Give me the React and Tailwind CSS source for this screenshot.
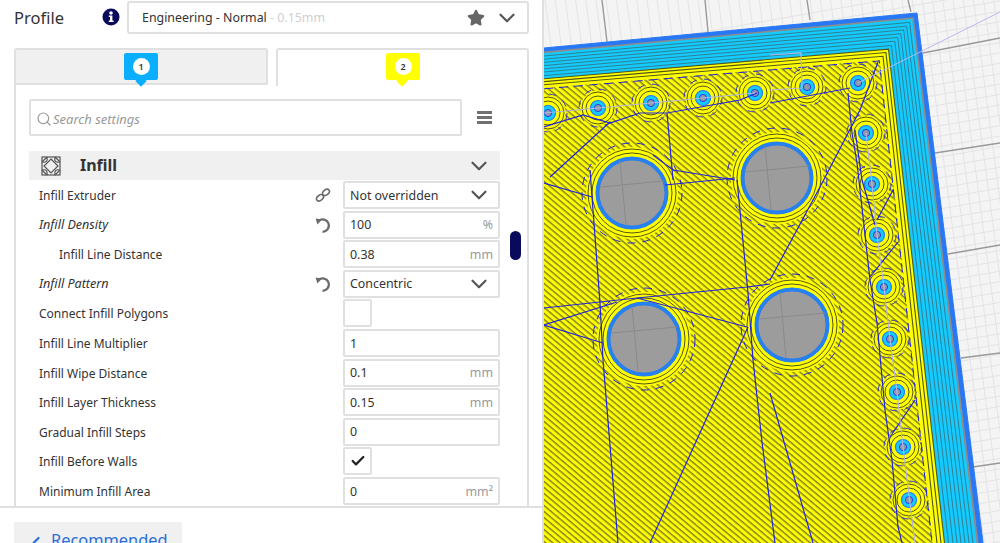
import { ChevronDown, ChevronLeft, Search, Star, Check } from "lucide-react";

const rows = [
  { label: "Infill Extruder", type: "select", value: "Not overridden", icon: "link" },
  { label: "Infill Density", italic: true, value: "100", unit: "%", icon: "reset" },
  { label: "Infill Line Distance", indent: true, value: "0.38", unit: "mm" },
  { label: "Infill Pattern", italic: true, type: "select", value: "Concentric", icon: "reset" },
  { label: "Connect Infill Polygons", type: "check" },
  { label: "Infill Line Multiplier", value: "1" },
  { label: "Infill Wipe Distance", value: "0.1", unit: "mm" },
  { label: "Infill Layer Thickness", value: "0.15", unit: "mm" },
  { label: "Gradual Infill Steps", value: "0" },
  { label: "Infill Before Walls", type: "check", checked: true },
  { label: "Minimum Infill Area", value: "0", unit: "mm²" },
];

const ResetIcon = () => (
  <svg width="18" height="18" viewBox="0 0 18 18" fill="none" stroke="#6b6b6b" strokeWidth="2.2">
    <path d="M4.5 5 A6.2 6.2 0 1 1 8.5 15.8" />
    <path d="M1.6 2.6 L8 3.4 L3.4 8.6 Z" fill="#6b6b6b" stroke="none" />
  </svg>
);

const LinkIcon = () => (
  <svg width="16" height="16" viewBox="0 0 16 16" fill="none" stroke="#6b6b6b" strokeWidth="1.6">
    <ellipse cx="5" cy="10.8" rx="3.8" ry="2.6" transform="rotate(-38 5 10.8)" />
    <ellipse cx="11" cy="5.4" rx="3.8" ry="2.6" transform="rotate(-38 11 5.4)" />
  </svg>
);

const InfillIcon = () => (
  <svg width="20" height="20" viewBox="0 0 20 20" fill="none" stroke="#555" strokeWidth="1.2">
    <rect x="1" y="1" width="18" height="18" />
    <path d="M1 6 L6 1 M14 1 L19 6 M19 14 L14 19 M6 19 L1 14 M6 1 C7 5 5 7 1 6 M14 1 C13 5 15 7 19 6 M19 14 C15 13 13 15 14 19 M6 19 C7 15 5 13 1 14 M10 3 L17 10 L10 17 L3 10 Z" />
  </svg>
);

const Badge = ({ n, className }) => (
  <div className={`absolute top-[3px] flex h-[27px] w-[34px] items-center justify-center rounded-[2px] ${className}`}>
    <div className="flex h-[17px] w-[17px] items-center justify-center rounded-full bg-white text-[9px] font-semibold text-[#333]">
      {n}
    </div>
  </div>
);

const Row = ({ row }) => (
  <div className="flex h-[28px] items-center">
    <div
      className={`w-[284px] shrink-0 pt-[2px] text-[#333] ${row.indent ? "pl-[30px]" : "pl-[10px]"} ${row.italic ? "text-[12.6px] italic" : "text-[12px]"}`}
    >
      {row.label}
    </div>
    <div className="flex w-[30px] shrink-0 items-center justify-center pr-[10px]">
      {row.icon === "link" && <LinkIcon />}
      {row.icon === "reset" && <ResetIcon />}
    </div>
    {row.type === "check" ? (
      <div className="flex h-[28px] w-[29px] items-center justify-center rounded-[2px] border-2 border-[#e0e0e0] bg-white">
        {row.checked && <Check size={16} strokeWidth={3.4} color="#222" />}
      </div>
    ) : (
      <div className="flex h-[28px] w-[157px] items-center justify-between rounded-[2px] border-2 border-[#e0e0e0] bg-white pl-[5px] pr-[5px] pt-[2px] text-[12.4px] text-[#333]">
        <span>{row.value}</span>
        {row.type === "select" ? (
          <ChevronDown size={26} strokeWidth={2} color="#555" className="mr-[1px] mt-[-2px]" />
        ) : (
          <span className="text-[#999]">{row.unit}</span>
        )}
      </div>
    )}
  </div>
);

// bed outline: left point, corner, bottom point for inset t (t=1 is where the infill begins)
const mix = (a, b, t) => [a[0] + (b[0] - a[0]) * t, a[1] + (b[1] - a[1]) * t];
const corners = (t) => [
  mix([544, 48], [544, 88], t),
  mix([917, 13], [880, 60], t),
  mix([983, 543], [933, 543], t),
];
const line = (t) => corners(t).map((p) => p.join(",")).join(" ");
const shape = (t) => `${line(t)} 544,543`;

const smallHoles = [
  [548, 113], [598, 108], [651, 103], [703, 98], [755, 93], [807, 87], [858, 83],
  [866, 133], [872, 184], [877, 235], [884, 287], [890, 339], [897, 392], [903, 447], [909, 500],
];
const bigHoles = [
  [632, 193, 36], [777, 178, 36], [644, 339, 37], [792, 325, 37],
];
const travels = [
  "544,127 583,115 610,123 640,113 667,113 740,100 757,93",
  "550,177 610,122",
  "667,113 673,180",
  "653,155 673,170 735,180",
  "544,183 592,197",
  "590,170 592,197 600,303 603,360 618,543",
  "544,308 637,298 747,287 770,284",
  "544,325 617,302",
  "544,325 603,343",
  "637,298 747,327",
  "737,180 748,293 753,360 762,442 775,543",
  "770,393 813,543",
  "748,327 650,543",
  "770,103 850,88",
  "878,62 860,110 820,187 770,280",
  "848,93 852,133 857,163 870,280 877,323 885,410 892,460 898,527 902,543",
  "893,190 877,220",
  "898,242 870,277",
  "915,400 890,437",
  "855,130 862,180 875,225",
  "665,185 735,178",
];
const moves = [
  "544,113 598,108 651,103 703,98 755,93",
  "770,90 802,88 801,53 770,55",
  "866,133 872,184 877,235 884,287 890,339 897,392 903,447 915,543",
];

const BedView = () => (
  <svg className="h-[543px] w-[456px] shrink-0" viewBox="544 0 456 543">
    <defs>
      <pattern id="hatch" width="4.6" height="4.6" patternUnits="userSpaceOnUse" patternTransform="rotate(40)">
        <rect width="4.6" height="4.6" fill="#ffff00" />
        <rect width="4.6" height="1.5" fill="#85851c" />
      </pattern>
    </defs>
    <rect x="544" y="0" width="456" height="543" fill="#f4f4f4" />
    {/* build plate grid */}
    {Array.from({ length: 50 }, (_, i) => (
      <path key={i} d={`M${545 + i * 10.2} 0 L${545 + i * 10.2 + 72} 543`} stroke="#e4e4e4" strokeWidth="1" />
    ))}
    {Array.from({ length: 60 }, (_, i) => (
      <path key={i} d={`M544 ${60 + i * 10.4} L1000 ${-20 + i * 10.4}`} stroke="#e4e4e4" strokeWidth="1" />
    ))}
    <g stroke="#999" strokeWidth="1.4">
      <path d="M602 0 L607 42 M705 0 L708 32 M807 0 L810 20 M908 0 L911 12" />
      <path d="M923 53 L1000 38 M935 153 L1000 143 M948 254 L1000 245 M961 358 L1000 353 M973 467 L1000 463" />
    </g>
    {/* skirt, walls and skin */}
    <polygon points={shape(0)} fill="#2878f5" stroke="#2878f5" strokeWidth="1" strokeLinejoin="round" />
    <polygon points={shape(0.09)} fill="#8c8c8c" />
    <polygon points={shape(0.13)} fill="#14cbff" />
    {[0.2, 0.28, 0.36, 0.44, 0.52, 0.6, 0.69].map((t) => (
      <polyline key={t} points={line(t)} fill="none" stroke="#2f7f95" strokeWidth="1" />
    ))}
    <polygon points={shape(0.77)} fill="#ffff00" />
    {[0.77, 0.84, 0.92].map((t) => (
      <polyline key={t} points={line(t)} fill="none" stroke="#55551a" strokeWidth="1.1" />
    ))}
    <polygon points={shape(1)} fill="url(#hatch)" />
    <polyline points={line(1.02)} fill="none" stroke="#2020e6" strokeWidth="1" strokeDasharray="9 6" />
    {/* big holes */}
    {bigHoles.map(([x, y, r]) => (
      <g key={x}>
        <circle cx={x} cy={y} r={r + 14} fill="none" stroke="#2020e6" strokeWidth="1" strokeDasharray="8 7" />
        <circle cx={x} cy={y} r={r + 10} fill="#ffff00" />
        <circle cx={x} cy={y} r={r + 8} fill="none" stroke="#55551a" strokeWidth="1" />
        <circle cx={x} cy={y} r={r + 4} fill="none" stroke="#55551a" strokeWidth="1" />
        <circle cx={x} cy={y} r={r - 1.5} fill="#9c9c9c" stroke="#2680f0" strokeWidth="4" />
        <path d={`M${x - 12} ${y - r + 4} L${x - 6} ${y + r - 4} M${x - r + 4} ${y - 6} L${x + r - 4} ${y - 12}`} stroke="#8a8a8a" strokeWidth="1" />
      </g>
    ))}
    {/* small holes */}
    {smallHoles.map(([x, y]) => (
      <g key={x}>
        <circle cx={x} cy={y} r="19" fill="none" stroke="#2020e6" strokeWidth="0.9" strokeDasharray="7 8" />
        <circle cx={x} cy={y} r="17.5" fill="#ffff00" />
        <circle cx={x} cy={y} r="16" fill="none" stroke="#55551a" strokeWidth="1" />
        <circle cx={x} cy={y} r="12" fill="none" stroke="#55551a" strokeWidth="1" />
        <circle cx={x} cy={y} r="7.5" fill="#14cbff" stroke="#2878f5" strokeWidth="1.2" />
        <circle cx={x} cy={y} r="3.6" fill="#8d9aa8" stroke="#2020e6" strokeWidth="0.8" />
      </g>
    ))}
    {/* travel moves */}
    {travels.map((p) => (
      <polyline key={p} points={p} fill="none" stroke="#2020e6" strokeWidth="1.2" />
    ))}
    {moves.map((p) => (
      <polyline key={p} points={p} fill="none" stroke="#b4b4e6" strokeWidth="1.2" />
    ))}
    <path d="M858 83 L1000 12" stroke="#b8b8f0" strokeWidth="1" />
  </svg>
);

export default function App() {
  return (
    <div className="flex h-[543px] w-[1000px] overflow-hidden bg-white font-['Noto_Sans',sans-serif]">
      <div className="flex h-full w-[544px] shrink-0 flex-col border-r-2 border-[#e0e0e0]">
        {/* profile row */}
        <div className="flex h-[48px] shrink-0 items-start pl-[14px] pr-[13px] pt-[1px]">
          <div className="flex h-[32px] w-[88px] items-center pt-[2px] text-[16.5px] text-[#333]">Profile</div>
          <div className="flex h-[32px] w-[25px] items-center">
            <svg width="18" height="18" viewBox="0 0 18 18">
              <circle cx="9" cy="9" r="8.5" fill="#0a0a5c" />
              <circle cx="9" cy="5" r="1.8" fill="#fff" />
              <path d="M6.8 7.6 H10.4 V12.6 H11.6 V14 H6.8 V12.6 H8 V9 H6.8 Z" fill="#fff" />
            </svg>
          </div>
          <div className="flex h-[33px] flex-1 items-center justify-between rounded-[3px] border-2 border-[#e0e0e0] pl-[13px] pr-[7px] text-[12.4px] text-[#333]">
            <span className="pt-[1px]">
              Engineering - Normal <span className="text-[#d0d0d0]">- 0.15mm</span>
            </span>
            <div className="flex items-center gap-[9px]">
              <Star size={18} fill="#666" color="#666" />
              <ChevronDown size={26} strokeWidth={2} color="#555" />
            </div>
          </div>
        </div>

        {/* extruder tabs */}
        <div className="relative flex h-[37px] shrink-0 pl-[14px] pr-[13px]">
          <div className="relative h-[37px] w-[254px] rounded-t-[3px] border-2 border-[#e0e0e0] bg-[#f0f0f0]">
            <Badge n="1" className="left-[108px] bg-[#0aaeff]" />
            <div className="absolute left-[121px] top-[27px] h-[8px] w-[8px] rotate-45 bg-[#0aaeff]" />
          </div>
          <div className="relative z-10 ml-[8px] h-[38px] flex-1 rounded-t-[3px] border-2 border-b-0 border-[#e0e0e0] bg-white">
            <Badge n="2" className="left-[108px] bg-[#ffff00]" />
            <div className="absolute left-[120px] top-[27px] h-[8px] w-[8px] rotate-45 bg-[#ffff00]" />
          </div>
        </div>

        {/* settings */}
        <div className="relative ml-[14px] mr-[13px] flex min-h-0 flex-1 flex-col overflow-hidden border-x-2 border-[#e0e0e0] pl-[13px] pt-[14px]">
          <div className="flex h-[37px] shrink-0 items-center">
            <div className="flex h-[37px] w-[433px] items-center gap-[1px] rounded-[2px] border-2 border-[#e0e0e0] pl-[5px] text-[13px] italic text-[#999]">
              <Search size={16} color="#999" strokeWidth={1.8} className="mt-[3px]" />
              <span className="pt-[4px]">Search settings</span>
            </div>
            <div className="ml-[15px] flex w-[15px] flex-col gap-[2.6px]">
              <div className="h-[2.6px] bg-[#707070]" />
              <div className="h-[2.6px] bg-[#707070]" />
              <div className="h-[2.6px] bg-[#707070]" />
            </div>
          </div>
          <div className="mt-[15px] flex h-[29px] w-[471px] shrink-0 items-center bg-[#f0f0f0] pl-[12px] pr-[8px]">
            <InfillIcon />
            <span className="ml-[19px] mt-[-1px] flex-1 text-[16px] font-bold text-[#333]">Infill</span>
            <ChevronDown size={26} strokeWidth={2} color="#555" />
          </div>
          <div className="mt-[1px] flex w-[471px] shrink-0 flex-col gap-[1.6px]">
            {rows.map((row) => (
              <Row key={row.label} row={row} />
            ))}
          </div>
          <div className="absolute left-[494px] top-[146px] h-[29px] w-[11px] rounded-full bg-[#0a0a5c]" />
        </div>

        {/* footer */}
        <div className="h-[37px] shrink-0 border-t-2 border-[#e0e0e0] pl-[14px] pt-[14px]">
          <div className="flex h-[30px] w-[168px] items-start gap-[5px] bg-[#f0f0f0] pl-[12px] pt-[7px] text-[16.4px] leading-[22px] text-[#2b6fd6]">
            <ChevronLeft size={20} strokeWidth={2.6} className="mt-[4px]" />
            Recommended
          </div>
        </div>
      </div>
      <BedView />
    </div>
  );
}
